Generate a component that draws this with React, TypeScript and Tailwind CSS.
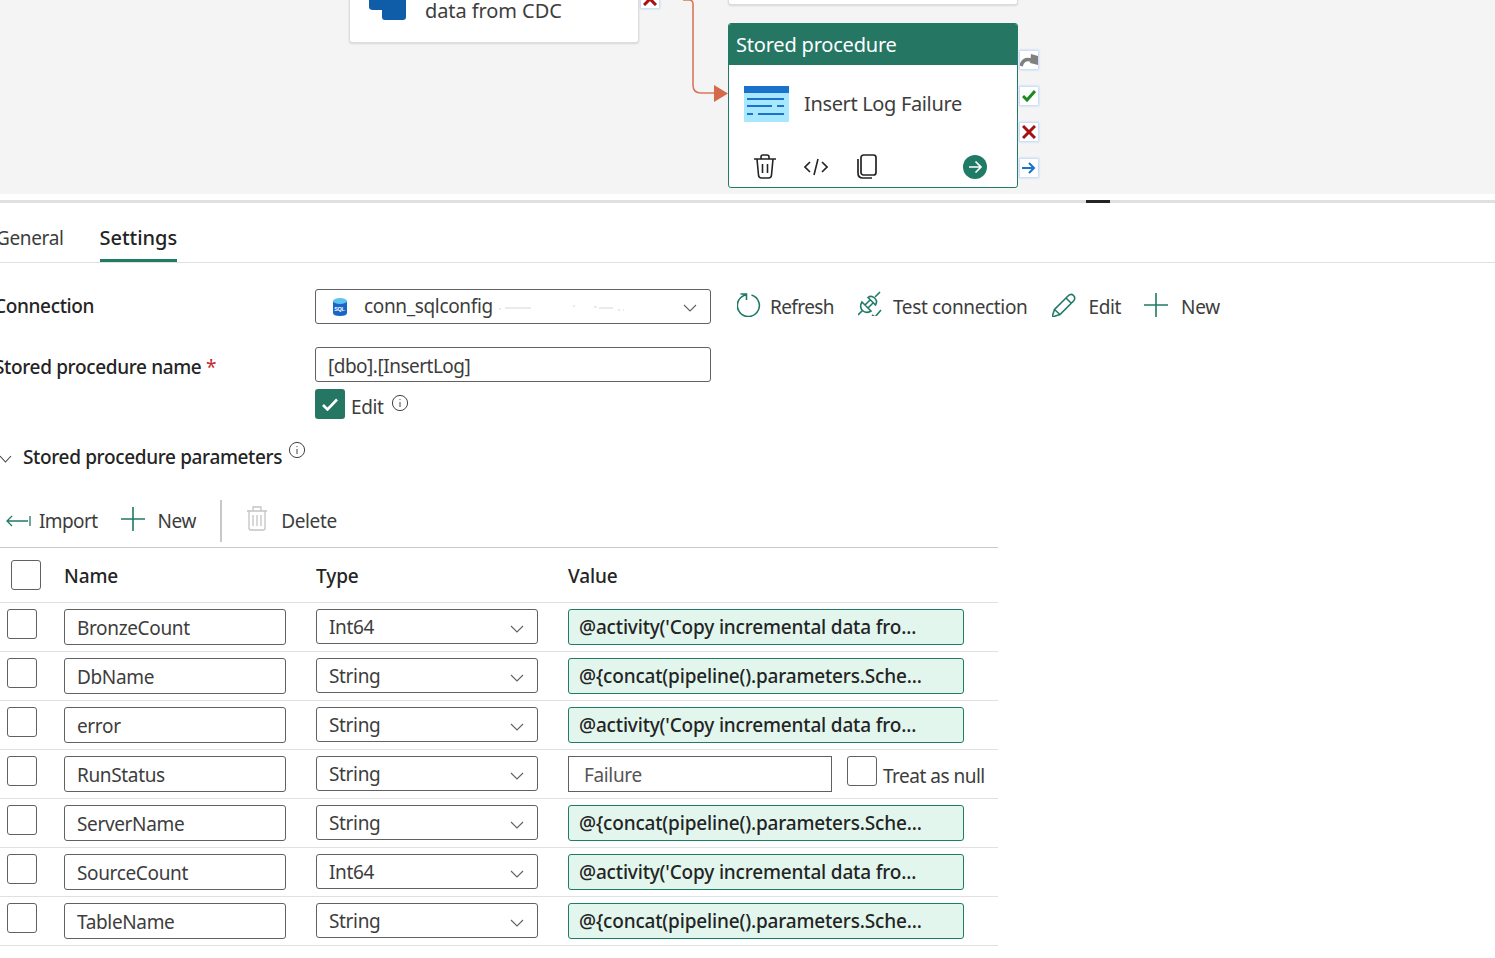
function Chevron({ className = '' }: { className?: string }) {
  return (
    <svg width="14" height="8" viewBox="0 0 14 8" fill="none" stroke="#616161" strokeWidth="1.1" className={className}>
      <path d="M1 1l6 6 6-6" />
    </svg>
  );
}

function Info({ size = 18 }: { size?: number }) {
  return (
    <svg width={size} height={size} viewBox="0 0 18 18" fill="none" stroke="#424242" strokeWidth="1">
      <circle cx="9" cy="9" r="7.6" />
      <path d="M9 8v5" />
      <circle cx="9" cy="5.6" r=".6" fill="#424242" stroke="none" />
    </svg>
  );
}

function Box({ className = '' }: { className?: string }) {
  return <div className={`w-[30px] h-[30px] rounded-[3px] border border-[#616161] bg-white shrink-0 ${className}`} />;
}

function Plus() {
  return (
    <svg width="24" height="24" viewBox="0 0 24 24" stroke="#1f7a66" strokeWidth="1.6" fill="none">
      <path d="M12 0v24M0 12h24" />
    </svg>
  );
}

function SideBtn({ children }: { children: React.ReactNode }) {
  return (
    <div className="w-[18px] h-[18px] bg-white shadow-[0_0_2px_1px_#bcd4f5] flex items-center justify-center">{children}</div>
  );
}

function Canvas() {
  return (
    <div className="relative h-[194px] bg-[#f4f4f4] overflow-hidden">
      <div className="absolute left-[349px] top-[-40px] w-[290px] h-[83px] bg-white border border-[#dcdcdc] rounded-[3px] shadow-[0_1px_2px_rgba(0,0,0,0.12)]">
        <svg className="absolute left-[19px] top-[30px]" width="38" height="30" viewBox="0 0 38 30">
          <path d="M0 0h37v26q0 3-3 3H16q-3 0-3-3v-7H4q-4 0-4-3z" fill="#0f5ca8" />
        </svg>
        <span className="absolute left-[75px] top-[36px] text-[20px] tracking-[-0.08px] leading-[28px] text-[#3d3d3d]">data from CDC</span>
      </div>
      <div className="absolute left-[641px] top-[-10px] w-[18px] h-[18px] bg-white shadow-[0_0_2px_1px_#bcd4f5] flex items-center justify-center">
        <svg width="14" height="14" viewBox="0 0 14 14" stroke="#a80f0f" strokeWidth="3"><path d="M1 1l12 12M13 1L1 13" /></svg>
      </div>
      <div className="absolute left-[728px] top-[-30px] w-[290px] h-[35px] bg-white border border-[#dcdcdc] rounded-[3px] shadow-[0_1px_2px_rgba(0,0,0,0.12)]" />
      <svg className="absolute left-[680px] top-0" width="50" height="110" viewBox="0 0 50 110" fill="none">
        <path d="M3 0h6q4 0 4 4v81q0 8 8 8h14" stroke="#d9775a" strokeWidth="1.6" />
        <path d="M34 85l14 8.500-14 8.500z" fill="#d5694a" />
      </svg>

      <div className="absolute left-[728px] top-[23px] w-[290px] h-[165px] bg-white border border-[#1f7a66] rounded-[3px] overflow-hidden">
        <div className="h-[41px] bg-[#257663] text-white text-[20px] tracking-[-0.2px] leading-[42px] pl-[7px]">Stored procedure</div>
        <svg className="absolute left-[15px] top-[62px]" width="45" height="36" viewBox="0 0 45 36">
          <rect width="45" height="36" rx="1" fill="#a8e8ff" />
          <rect width="45" height="7" fill="#1a72cc" />
          <path d="M3 13h37M3 20h25M33 20h7M3 28h6M14 28h26" stroke="#1a72cc" strokeWidth="2.200" />
        </svg>
        <span className="absolute left-[75px] top-[66px] text-[20px] tracking-[-0.35px] leading-[28px] text-[#3d3d3d]">Insert Log Failure</span>
        <svg className="absolute left-[24px] top-[130px]" width="24" height="25" viewBox="0 0 24 25" fill="none" stroke="#242424" strokeWidth="1.6">
          <path d="M1 5h22M8 5V3q0-2 2-2h4q2 0 2 2v2M4 5l1.500 16q.2 3 3 3h7q2.800 0 3-3L20 5M9.500 10v9M14.500 10v9" />
        </svg>
        <svg className="absolute left-[75px] top-[133px]" width="24" height="20" viewBox="0 0 24 20" fill="none" stroke="#242424" strokeWidth="1.6">
          <path d="M6 5L1 10l5 5M18 5l5 5-5 5M14 2l-4 16" />
        </svg>
        <svg className="absolute left-[127px] top-[130px]" width="22" height="25" viewBox="0 0 22 25" fill="none" stroke="#242424" strokeWidth="1.7">
          <rect x="5" y="1" width="15" height="20" rx="2.500" />
          <path d="M2 5v14q0 5 5 5h9" />
        </svg>
        <svg className="absolute left-[234px] top-[131px]" width="24" height="24" viewBox="0 0 24 24" fill="none">
          <circle cx="12" cy="12" r="12" fill="#1f7a66" />
          <path d="M6 12h12M12.500 6.500L18 12l-5.500 5.500" stroke="#fff" strokeWidth="1.700" />
        </svg>
      </div>

      <div className="absolute left-[1020px] top-[51px] flex flex-col gap-[18px]">
        <SideBtn>
          <svg width="18" height="14" viewBox="0 0 18 14" fill="none"><path d="M1 13q2-8 10-6" stroke="#808080" strokeWidth="3.500" /><path d="M11 1l7 2v9l-8-2z" fill="#808080" /></svg>
        </SideBtn>
        <SideBtn>
          <svg width="14" height="12" viewBox="0 0 14 12" fill="none" stroke="#1d8a1d" strokeWidth="3"><path d="M1 6l4 4 8-9" /></svg>
        </SideBtn>
        <SideBtn>
          <svg width="14" height="14" viewBox="0 0 14 14" stroke="#a80f0f" strokeWidth="3"><path d="M1 1l12 12M13 1L1 13" /></svg>
        </SideBtn>
        <SideBtn>
          <svg width="14" height="12" viewBox="0 0 14 12" fill="none" stroke="#1a72cc" strokeWidth="2"><path d="M0 6h12M7 1l5 5-5 5" /></svg>
        </SideBtn>
      </div>
    </div>
  );
}

function Tool({ icon, label, className = '', textClass = '' }: { icon: React.ReactNode; label: string; className?: string; textClass?: string }) {
  return (
    <div className={`flex items-center ${className}`}>
      {icon}
      <span className={`text-[#3d3d3d] ${textClass}`}>{label}</span>
    </div>
  );
}

const rows = [
  ['BronzeCount', 'Int64', "@activity('Copy incremental data fro..."],
  ['DbName', 'String', '@{concat(pipeline().parameters.Sche...'],
  ['error', 'String', "@activity('Copy incremental data fro..."],
  ['RunStatus', 'String', ''],
  ['ServerName', 'String', '@{concat(pipeline().parameters.Sche...'],
  ['SourceCount', 'Int64', "@activity('Copy incremental data fro..."],
  ['TableName', 'String', '@{concat(pipeline().parameters.Sche...'],
];

function Row({ name, type, value }: { name: string; type: string; value: string }) {
  return (
    <div className="h-[49px] border-b border-[#e0e0e0] flex items-start pt-[6px] pl-[7px]">
      <Box />
      <div className="ml-[27px] w-[222px] h-[36px] border border-[#616161] rounded-[3px] pl-[12px] leading-[36px] text-[#3d3d3d]">{name}</div>
      <div className="ml-[30px] w-[222px] h-[35px] border border-[#616161] rounded-[3px] pl-[12px] pr-[13px] flex items-center justify-between text-[#3d3d3d]">
        <span className="mt-[2px]">{type}</span>
        <Chevron className="mt-[5px]" />
      </div>
      {value ? (
        <div className="ml-[30px] w-[396px] h-[36px] border border-[#1f7a66] rounded-[3px] bg-[#e2f6ee] pl-[10px] leading-[35px] font-medium tracking-[-0.17px] text-[#242424] whitespace-nowrap overflow-hidden">{value}</div>
      ) : (
        <>
          <div className="ml-[30px] w-[264px] h-[36px] border border-[#616161] pl-[15px] leading-[37px] text-[#555555]">Failure</div>
          <Box className="ml-[15px]" />
          <span className="ml-[6px] leading-[41px] tracking-[-0.5px] text-[#3d3d3d] whitespace-nowrap">Treat as null</span>
        </>
      )}
    </div>
  );
}

export default function App() {
  return (
    <div className="w-[1495px] h-[958px] overflow-hidden bg-white text-[19px] tracking-[-0.35px] font-['Noto_Sans',sans-serif]">
      <Canvas />
      <div className="h-[6px]" />
      <div className="relative h-[3px] bg-[#e0e0e0]">
        <div className="absolute left-[1086px] top-0 w-[24px] h-[3px] bg-[#242424]" />
      </div>

      <div className="h-[60px] border-b border-[#e0e0e0] flex overflow-hidden">
        <div className="flex items-start gap-[36px] ml-[-4px]">
          <span className="mt-[21px] text-[#3d3d3d]">General</span>
          <span className="h-[59px] pt-[20px] text-[20px] tracking-[-0.05px] font-medium text-[#242424] border-b-[3px] border-[#1f7a66]">Settings</span>
        </div>
      </div>

      <div className="flex mt-[26px] items-start">
        <div className="w-[315px] overflow-hidden">
          <span className="block ml-[-6px] mt-[3px] font-medium text-[#242424]">Connection</span>
        </div>
        <div className="w-[396px] h-[35px] border border-[#616161] rounded-[3px] flex items-center pl-[17px] pr-[13px]">
          <svg width="14" height="18" viewBox="0 0 14 18">
            <path d="M0 3v12q0 3 7 3t7-3V3z" fill="#1a66c4" />
            <ellipse cx="7" cy="3" rx="7" ry="3" fill="#5ec4ef" />
            <text x="1.200" y="12.500" fontSize="5.500" fontWeight="700" fill="#fff" fontFamily="Liberation Sans">SQL</text>
          </svg>
          <span className="ml-[17px] text-[#3d3d3d]">conn_sqlconfig</span>
          <svg className="ml-[5px] mt-[3px]" width="130" height="8" viewBox="0 0 130 8" fill="none" stroke="#d6d6d6" strokeWidth="1.200">
            <path d="M1 5h2M7 4h26M75 2h2M96 3h3M101 4h14M120 6h2M125 6h1" />
          </svg>
          <Chevron className="ml-auto mt-[3px]" />
        </div>
        <div className="flex items-center h-[35px] ml-[26px] mt-[1px] text-[#3d3d3d]">
          <Tool
            label="Refresh"
            textClass="tracking-[-0.6px]"
            icon={
              <svg className="mr-[9px] mt-[-5px]" width="24" height="24" viewBox="0 0 24 24" fill="none" stroke="#1f7a66" strokeWidth="1.600">
                <path d="M14.500 2A11 11 0 1 1 9.500 1.700M3.500 1h6v6" />
              </svg>
            }
          />
          <Tool
            className="ml-[24px]"
            label="Test connection"
            icon={
              <svg className="mr-[10px] mt-[-8px]" width="25" height="25" viewBox="6 3 25 25" fill="none" stroke="#1f7a66" strokeWidth="1.600">
                <path d="M6 27l5-5M23 9l5-5M10 14l9 9q-5 3-8.500-.5T10 14zM16 9.500l7.500 7.500q2.500-4-1-7T16 9.500zM13 17l5-5M16 20l5-5M20 27l3 2 6-7" />
              </svg>
            }
          />
          <Tool
            className="ml-[25px]"
            label="Edit"
            icon={
              <svg className="mr-[12px] mt-[-6px]" width="24" height="25" viewBox="6 4 24 25" fill="none" stroke="#1f7a66" strokeWidth="1.600">
                <path d="M6 29l2.500-7.500L22 8q3-3 5.500-.5t0 5.500L14 26.500zM8.500 21.500l5.500 5M20 10l5.500 5.500" />
              </svg>
            }
          />
          <Tool className="ml-[23px]" label="New" icon={<span className="mr-[13px] mt-[-5px] flex"><Plus /></span>} />
        </div>
      </div>

      <div className="flex mt-[22px] items-start">
        <div className="w-[315px] overflow-hidden">
          <span className="block ml-[-6px] mt-[6px] font-medium text-[#242424] whitespace-nowrap">
            Stored procedure name <span className="text-[#c4262e] font-normal">*</span>
          </span>
        </div>
        <div className="w-[396px] h-[35px] border border-[#616161] rounded-[3px] pl-[12px] leading-[36px] tracking-[-0.5px] text-[#3d3d3d]">[dbo].[InsertLog]</div>
      </div>

      <div className="flex ml-[315px] mt-[7px] items-start">
        <div className="w-[30px] h-[30px] rounded-[3px] bg-[#257663] flex items-center justify-center">
          <svg width="16" height="13" viewBox="0 0 16 13" fill="none" stroke="#fff" strokeWidth="2.600"><path d="M1 7l4.500 4.500L15 1.500" /></svg>
        </div>
        <span className="ml-[6px] mt-[4px] text-[#3d3d3d]">Edit</span>
        <span className="ml-[7px] mt-[5px]"><Info /></span>
      </div>

      <div className="flex items-start mt-[21px]">
        <svg className="mt-[12px] ml-[-1px]" width="13" height="8" viewBox="0 0 13 8" fill="none" stroke="#424242" strokeWidth="1.100"><path d="M1 1l5.500 6L12 1" /></svg>
        <span className="ml-[11px] font-medium text-[#242424] leading-[28px]">Stored procedure parameters</span>
        <span className="ml-[6px] mt-[-2px]"><Info /></span>
      </div>

      <div className="flex items-center mt-[27px] h-[47px] text-[#3d3d3d]">
        <svg className="ml-[6px] mr-[8px]" width="25" height="12" viewBox="0 0 25 12" fill="none" stroke="#1f7a66" strokeWidth="1.300"><path d="M24 1v10M22 6H1M6 1L1 6l5 5" /></svg>
        <span className="tracking-[-0.6px]">Import</span>
        <span className="ml-[23px] mr-[13px] mt-[-5px] flex"><Plus /></span>
        <span>New</span>
        <div className="w-[2px] h-[42px] bg-[#c8c8c8] ml-[24px]" />
        <svg className="ml-[25px] mr-[14px] mt-[-5px]" width="20" height="25" viewBox="0 0 20 25" fill="none" stroke="#c4c4c4" strokeWidth="1.300">
          <path d="M0 5h20M6 5V1h8v4M2 5v17q0 2 2 2h12q2 0 2-2V5M6 9v11M10 9v11M14 9v11" />
        </svg>
        <span>Delete</span>
      </div>

      <div className="w-[998px] border-t border-[#c8c8c8] mt-[2px]">
        <div className="h-[55px] border-b border-[#e0e0e0] flex items-center font-medium tracking-[-0.1px] text-[#242424] pl-[11px]">
          <Box />
          <span className="ml-[23px] w-[252px] mt-[4px]">Name</span>
          <span className="w-[252px] mt-[4px]">Type</span>
          <span className="mt-[4px]">Value</span>
        </div>
        {rows.map((r) => (
          <Row key={r[0]} name={r[0]} type={r[1]} value={r[2]} />
        ))}
      </div>
    </div>
  );
}
